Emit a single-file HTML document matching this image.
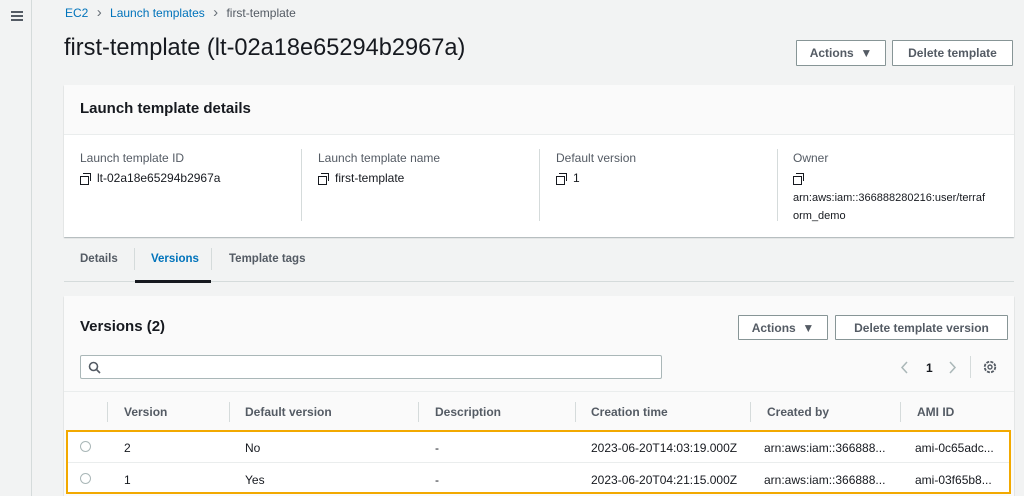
<!DOCTYPE html>
<html><head><style>
*{box-sizing:border-box;margin:0;padding:0}
body{width:1024px;height:496px;overflow:hidden;background:#f2f3f3;font-family:"Liberation Sans",sans-serif;color:#16191f;position:relative;font-size:12px}
.a{position:absolute;white-space:nowrap}
.btn{position:absolute;border:1px solid #879596;background:#fff;font-weight:bold;font-size:12px;color:#545b64;display:flex;align-items:center;justify-content:center;border-radius:1px}
.lbl{color:#545b64;font-size:12px}
.cp{display:inline-block;width:10px;height:10px;position:relative;vertical-align:-1px;margin-right:7px}
.cp:before{content:"";position:absolute;left:0;top:3px;width:7px;height:7px;border:1.5px solid #16191f;background:#fff}
.cp:after{content:"";position:absolute;left:3px;top:0;width:7px;height:7px;border-top:1.5px solid #16191f;border-right:1.5px solid #16191f}
.th{font-weight:bold;color:#545b64;font-size:12px}
.vs{position:absolute;width:1px;background:#d5dbdb}
.radio{position:absolute;width:11px;height:11px;border:1px solid #aab7b8;border-radius:50%;background:#fff}
</style></head><body>
<div class="a" style="left:0;top:0;width:32px;height:496px;background:#f2f3f3;border-right:1px solid #d5dbdb"></div>
<div class="a" style="left:11px;top:11px;width:12px;height:2px;background:#545b64;box-shadow:0 4px 0 #545b64,0 8px 0 #545b64"></div>
<div class="a" style="left:65px;top:4px;font-size:12px;color:#0073bb">EC2 <span style="color:#687078;margin:0 5px;font-size:15px">&#8250;</span> Launch templates <span style="color:#687078;margin:0 5px;font-size:15px">&#8250;</span> <span style="color:#545b64">first-template</span></div>
<div class="a" style="left:64px;top:35px;font-size:23.6px">first-template (lt-02a18e65294b2967a)</div>
<div class="btn" style="left:796px;top:40px;width:90px;height:26px">Actions&nbsp;&nbsp;▼</div>
<div class="btn" style="left:892px;top:40px;width:121px;height:26px">Delete template</div>

<div class="a" style="left:64px;top:85px;width:950px;height:152px;background:#fff;box-shadow:0 1px 1px rgba(0,28,36,.3)"></div>
<div class="a" style="left:64px;top:85px;width:950px;height:50px;background:#fafafa;border-bottom:1px solid #eaeded"></div>
<div class="a" style="left:80px;top:100px;font-size:15px;font-weight:bold">Launch template details</div>
<div class="vs" style="left:301px;top:149px;height:72px"></div>
<div class="vs" style="left:539px;top:149px;height:72px"></div>
<div class="vs" style="left:777px;top:149px;height:72px"></div>
<div class="a lbl" style="left:80px;top:151px">Launch template ID</div>
<div class="a" style="left:80px;top:171px"><span class="cp"></span>lt-02a18e65294b2967a</div>
<div class="a lbl" style="left:318px;top:151px">Launch template name</div>
<div class="a" style="left:318px;top:171px"><span class="cp"></span>first-template</div>
<div class="a lbl" style="left:556px;top:151px">Default version</div>
<div class="a" style="left:556px;top:171px"><span class="cp"></span>1</div>
<div class="a lbl" style="left:793px;top:151px">Owner</div>
<div class="a" style="left:793px;top:171px"><span class="cp"></span></div>
<div class="a" style="left:793px;top:189px;font-size:11px;line-height:18px;color:#16191f">arn:aws:iam::366888280216:user/terraf<br>orm_demo</div>

<div class="a th" style="left:80px;top:253px;font-size:11.5px">Details</div>
<div class="vs" style="left:134px;top:248px;height:22px"></div>
<div class="a th" style="left:151px;top:253px;color:#0073bb;font-size:11.5px">Versions</div>
<div class="vs" style="left:211px;top:248px;height:22px"></div>
<div class="a th" style="left:229px;top:253px;font-size:11.5px">Template tags</div>
<div class="a" style="left:64px;top:281px;width:950px;height:1px;background:#d5dbdb"></div>
<div class="a" style="left:135px;top:280px;width:76px;height:3px;background:#16191f"></div>

<div class="a" style="left:64px;top:296px;width:950px;height:200px;background:#fafafa;box-shadow:0 1px 1px rgba(0,28,36,.3)"></div>
<div class="a" style="left:80px;top:318px;font-size:15px;font-weight:bold">Versions (2)</div>
<div class="btn" style="left:738px;top:315px;width:90px;height:25px">Actions&nbsp;&nbsp;▼</div>
<div class="btn" style="left:835px;top:315px;width:173px;height:25px">Delete template version</div>
<div class="a" style="left:80px;top:355px;width:582px;height:24px;background:#fff;border:1px solid #aab7b8;border-radius:2px"></div>
<svg class="a" style="left:88px;top:361px" width="13" height="13" viewBox="0 0 13 13"><circle cx="5.5" cy="5.5" r="4" fill="none" stroke="#545b64" stroke-width="1.6"/><path d="M8.5 8.5L12 12" stroke="#545b64" stroke-width="1.6"/></svg>
<svg class="a" style="left:900px;top:361px" width="10" height="13" viewBox="0 0 10 13"><path d="M7 1L2 6.5 7 12" fill="none" stroke="#aab7b8" stroke-width="1.5"/></svg>
<div class="a" style="left:926px;top:361px;font-weight:bold;font-size:12px">1</div>
<svg class="a" style="left:947px;top:361px" width="10" height="13" viewBox="0 0 10 13"><path d="M3 1L8 6.5 3 12" fill="none" stroke="#aab7b8" stroke-width="1.5"/></svg>
<div class="vs" style="left:970px;top:356px;height:22px"></div>
<svg class="a" style="left:983px;top:360px" width="14" height="14" viewBox="0 0 14 14"><circle cx="7" cy="7" r="5.3" fill="none" stroke="#545b64" stroke-width="1.8" stroke-dasharray="3 1.2"/><circle cx="7" cy="7" r="2" fill="none" stroke="#545b64" stroke-width="1.4"/></svg>
<div class="a" style="left:64px;top:391px;width:950px;height:1px;background:#eaeded"></div>
<div class="vs" style="left:107px;top:402px;height:20px"></div>
<div class="vs" style="left:229px;top:402px;height:20px"></div>
<div class="vs" style="left:418px;top:402px;height:20px"></div>
<div class="vs" style="left:575px;top:402px;height:20px"></div>
<div class="vs" style="left:750px;top:402px;height:20px"></div>
<div class="vs" style="left:900px;top:402px;height:20px"></div>
<div class="a th" style="left:124px;top:405px">Version</div>
<div class="a th" style="left:245px;top:405px">Default version</div>
<div class="a th" style="left:435px;top:405px">Description</div>
<div class="a th" style="left:591px;top:405px">Creation time</div>
<div class="a th" style="left:767px;top:405px">Created by</div>
<div class="a th" style="left:917px;top:405px">AMI ID</div>
<div class="a" style="left:66px;top:430px;width:945px;height:64px;background:#fff;border:2px solid #f2a900"></div>
<div class="a" style="left:68px;top:462px;width:941px;height:1px;background:#eaeded"></div>
<div class="radio" style="left:80px;top:441px"></div>
<div class="radio" style="left:80px;top:473px"></div>
<div class="a" style="left:124px;top:441px">2</div>
<div class="a" style="left:245px;top:441px">No</div>
<div class="a" style="left:435px;top:441px">-</div>
<div class="a" style="left:591px;top:441px">2023-06-20T14:03:19.000Z</div>
<div class="a" style="left:764px;top:441px">arn:aws:iam::366888...</div>
<div class="a" style="left:915px;top:441px">ami-0c65adc...</div>
<div class="a" style="left:124px;top:473px">1</div>
<div class="a" style="left:245px;top:473px">Yes</div>
<div class="a" style="left:435px;top:473px">-</div>
<div class="a" style="left:591px;top:473px">2023-06-20T04:21:15.000Z</div>
<div class="a" style="left:764px;top:473px">arn:aws:iam::366888...</div>
<div class="a" style="left:915px;top:473px">ami-03f65b8...</div>
</body></html>
